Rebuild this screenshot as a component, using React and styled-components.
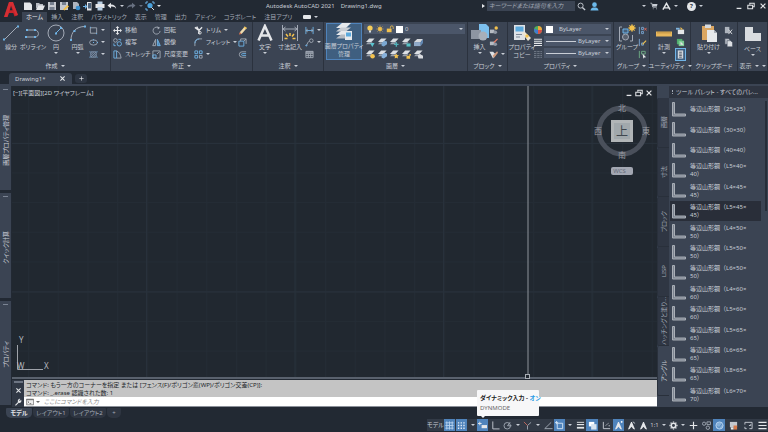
import React, { useState } from 'react';
import styled, { createGlobalStyle } from 'styled-components';

const C = {
  dark: '#222933',
  panel: '#3b4453',
  field: '#4b5669',
  line: '#2b323e',
  cell: '#323a46',
  text: '#c9ced6',
  dim: '#a3aab6',
  blue: '#6fb3e6',
  active: '#4f83bb',
  white: '#e4e6e9',
  yellow: '#f2c14e',
};

const GlobalStyle = createGlobalStyle`
  * { box-sizing: border-box; }
  body {
    margin: 0;
    background: ${C.dark};
    color: ${C.text};
    font-family: "Noto Sans", "Noto Sans CJK JP", sans-serif;
    font-size: 6px;
    line-height: 8px;
    font-feature-settings: "palt";
  }
  button, input, select {
    margin: 0;
    padding: 0;
    border: 0;
    background: none;
    color: inherit;
    font: inherit;
    font-feature-settings: inherit;
    border-radius: 0;
    outline: none;
  }
`;

/* ---------- icons ---------- */

const Svg = styled.svg`
  display: block;
  flex: none;
  width: ${props => props.$size}px;
  height: ${props => props.$size}px;
  fill: none;
  stroke: ${C.dim};
  stroke-width: 1;
`;

const sheets = (accent) => (
  <g stroke="none">
    <path d="M0 4.5 3.500 .5h6L6 4.5z" fill="#dcdfe3" />
    <path d="M0 7 2 4.800h5.500L5 7z" fill="#9aa1ac" />
    {accent}
  </g>
);

const annotation = (extra) => (
  <g>
    <path d="M1 9.5 4.500 1h1L9 9.500 7 9 5 6.500 3 9z" fill={C.white} stroke="none" />
    {extra}
  </g>
);

const SMALL = {
  newFile: <path d="M1 1.5h6l2 2V9H1z" fill={C.white} stroke="none" />,
  open: <g stroke="none"><path d="M1 2h3l1 1h3v2H3L1 8z" fill="#b8bcc3" /><path d="M3 4.5h7L8 9H1z" fill={C.white} /></g>,
  save: <g stroke="none"><path d="M1 1h8v8H1z" fill="#c5c9cf" /><path d="M3 1h4v3H3zM2.5 6h5v3h-5z" fill="#76808f" /></g>,
  saveAs: <g stroke="none"><path d="M1 1h8v8H1z" fill="#c5c9cf" /><path d="M3 1h4v3H3z" fill="#76808f" /><path d="M4 8.5 8.5 4 10 5.5 5.5 9.5z" fill={C.yellow} /></g>,
  web: <g stroke="none"><path d="M2 1h4l2 2v5H2z" fill="#aeb4be" /><circle cx="7" cy="7" r="2.3" fill="#3b8fce" /></g>,
  mobile: <g stroke="none"><path d="M4 1h4.500v8.500H4z" fill={C.white} /><path d="M5 2h3v5.500H5z" fill="#4d6178" /><path d="M0 5h2V3l2.5 2.5L2 8V6H0z" fill={C.blue} /></g>,
  print: <g stroke="none"><path d="M2.5.5h5V3h-5z" fill="#b8cfe4" /><path d="M.5 3h9v4h-9z" fill={C.white} /><path d="M2.5 6h5v3.5h-5z" fill="#b8cfe4" /></g>,
  undo: <path d="M4 1.8.5 4.6 4 7.4V5.6c2.5-.2 4 .4 5.200 2.400C9 5.2 7 3.6 4 3.6z" fill={C.white} stroke="none" />,
  redo: <path d="M6 1.8 9.5 4.6 6 7.4V5.600C3.500 5.4 2 6 .8 8 1 5.2 3 3.6 6 3.6z" fill="#687181" stroke="none" />,
  share: <g><path d="M1 1h2M1 1v2M9 1v2M9 1H7M1 9V7M1 9h2" stroke={C.blue} /><circle cx="5" cy="4.5" r="2.6" fill="#4ba3de" stroke="none" /><path d="M6.5 6.5 9 9" stroke={C.white} /></g>,
  search: <g stroke={C.text}><circle cx="4" cy="4" r="2.8" /><path d="M6 6l3 3" strokeWidth="1.5" /></g>,
  user: <g fill="#6bb8ea" stroke="none"><circle cx="5" cy="3" r="2.6" /><path d="M.5 9.5C.8 6.500 3 6 5 6s4.200.5 4.500 3.500z" /></g>,
  cart: <g><path d="M.5 1.5h1.700l1.300 5h5" stroke={C.text} /><path d="M2.600 2.500h6.800l-.9 3H3.300z" fill={C.text} stroke="none" /><path d="M3.500 8.500h1M7.500 8.500h1" stroke={C.text} /></g>,
  autodesk: <path d="M1 8.5 5 1.5l4 7M2.800 6.500h4.400" stroke={C.white} strokeWidth="1.6" />,
  minimize: <path d="M2 8h6" stroke={C.white} strokeWidth="1.6" />,
  restore: <g stroke={C.white} strokeWidth="1.3"><path d="M3.5 3.5V1.500h5.500v4.500H7" /><path d="M1 4h6v4.500H1z" /></g>,
  close: <path d="m2 2 6 6m0-6L2 8" stroke={C.white} strokeWidth="1.5" />,
  rect: <g><path d="M1.5 2h7v6h-7z" /><path d="M1 1.5h1M8 8.5h1" stroke={C.blue} strokeWidth="1.6" /></g>,
  ellipse: <g><ellipse cx="5" cy="5" rx="4.3" ry="2.9" /><path d="M4.400 5h1.200M4.400 2h1.200M8.800 5H10" stroke={C.blue} strokeWidth="1.3" /></g>,
  hatch: <g stroke="#7f93ab"><path d="M2 2h6v6H2zM2 4l2-2M2 6l4-4M2 8l6-6M4 8l4-4M6 8l2-2" /><path d="M.5 2h1M8.5 2h1M.5 8h1M8.5 8h1" stroke={C.blue} /></g>,
  move: <g><path d="M5 1v8M1 5h8" stroke={C.white} strokeWidth="1.3" /><path d="M5 0 3 2.200h4zM5 10 3 7.800h4zM0 5l2.200-2v4zM10 5 7.800 3v4z" fill={C.white} stroke="none" /></g>,
  copy: <g><circle cx="2.700" cy="2.700" r="2" /><circle cx="7" cy="6.500" r="2.400" stroke={C.blue} /><path d="M1 6v2.500h2M6 1.500h2.500V3" stroke={C.blue} /></g>,
  stretch: <g><path d="M1 1h3v8H1z" stroke={C.blue} /><path d="M4 1c3 1 4.500 4 5 8H4" /></g>,
  rotate: <g><path d="M7.800 2.300A3.900 3.900 0 1 0 9 5.500" /><path d="M6 .5 9 2 6.500 4z" fill={C.dim} stroke="none" /></g>,
  mirror: <g><path d="M4 1.500v7H.8z" /><path d="M6 1.500v7h3.200z" stroke={C.blue} fill="#4d86b5" /></g>,
  scale: <g><path d="M1 1h8v8H1z" /><path d="M1 5.500h3.500V9H1z" stroke={C.blue} /><path d="M5.500 4.500 8 2.200" /></g>,
  trim: <g stroke={C.white}><path d="M1 1.500 5.500 5M3 .8 5.500 5 9 1.500M5.500 5v4" strokeWidth="1.500" /><circle cx="6.500" cy="7.500" r="1.500" /></g>,
  fillet: <g><path d="M1 9V6c0-3 2-5 5-5h3" /><path d="M1 6c0-3 2-5 5-5" stroke={C.blue} /></g>,
  array: <g stroke={C.blue}><path d="M1 1h3v3H1zM6 1h3v3H6zM1 6h3v3H1z" /><path d="M6 6h3v3H6z" stroke={C.dim} /></g>,
  erase: <g stroke="none"><path d="M2 7 7.500.5l2.300 1.700L4 8.800z" fill="#f0dcae" /><path d="m7.500.5 2.300 1.700-1.100 1.300-2.200-1.800z" fill={C.yellow} /><path d="M1 9.500 2 7l2 1.800z" fill="#e0724e" /></g>,
  explode: <g><path d="M1 3.500h5.500V9H1z" stroke={C.blue} /><path d="M3 1h6v5.500M3 1v2.500M6.500 3.500 9 1" /></g>,
  offset: <g><path d="M9 2H4.500a3 3 0 0 0 0 6H9" /><path d="M9 4H5a1 1 0 0 0 0 2h4" stroke={C.blue} /></g>,
  dim: <g><path d="M1 1v8M9 1v8" stroke={C.blue} /><path d="M1 5h8" stroke={C.blue} /><path d="M3 3.500 1 5l2 1.500M7 3.500 9 5 7 6.500" /></g>,
  leader: <g><circle cx="7" cy="3" r="2" /><path d="M5 3.500C3 4 3 6 1.500 8.500" /><circle cx="1.500" cy="8.300" r=".7" stroke={C.blue} /></g>,
  table: <g><path d="M1 1.500h8v7H1zM1 4h8M1 6.200h8M3.700 4v4.500M6.300 4v4.500" /><path d="M1 2.300h8" strokeWidth="1.500" /></g>,
  bulb: <g stroke="none"><circle cx="5" cy="3.800" r="3.300" fill="#f5cd5b" /><path d="M3.800 7h2.400v2.300H3.800z" fill="#dfe2e5" /></g>,
  sun: <g><circle cx="5" cy="5" r="2.500" fill={C.yellow} stroke="none" /><path d="M5 .5v9M.5 5h9M1.800 1.800l6.400 6.400M8.200 1.800 1.800 8.200" stroke={C.yellow} strokeWidth=".7" /></g>,
  unlock: <g><path d="M1 4.500h6V9H1z" fill={C.yellow} stroke="none" /><path d="M5.500 4.500V2.800a1.700 1.700 0 0 1 3.500 0V5" stroke={C.yellow} /></g>,
  swatch: <path d="M0 0h10v10H0z" fill="#fff" stroke="none" />,
  lay1: sheets(<path d="M4.500 5.500h5L7 10z" fill="#5bc4cf" />),
  lay2: sheets(<path d="M4 5.500 7 3l3 1v3L6.500 9.500 4 8.500z" fill="#7ba7d0" />),
  lay3: sheets(<path d="M4.500 6.300h5v1.500h-5zM6.300 4.700h1.500v5H6.300z" fill="#4fb1b8" />),
  lay4: sheets(<path d="M5 6h4.500v3.500H5z" fill="#55c0c4" />),
  lay5: <g stroke="none"><path d="M0 4.500 3.500 1H10L7.500 4.500z" fill="#d4d7dc" /><path d="M0 4.500h7.500V9H0z" fill="#8fa9c8" /><path d="M7.500 4.500 10 1v4.500L7.500 9z" fill="#5f86b3" /></g>,
  lay6: sheets(<circle cx="7.300" cy="7" r="2.500" fill={C.yellow} />),
  lay7: sheets(<path d="M4 5.500 7 3l3 1v3L6.500 9.500 4 8.500z" fill="#88b2dc" />),
  lay8: sheets(<path d="m7 4 .8 1.600 2.200.2-1.500 1.500.3 2.200L7 8.500l-1.800 1 .3-2.200L4 5.800l2.200-.2z" fill={C.yellow} />),
  lay9: sheets(<path d="M5 6.500h4v3.300H5zM8.200 4.500h1.600v2H8.200z" fill={C.yellow} />),
  lay10: sheets(<path d="m4 6 2.500-1.500L10 6.500v3H5z" fill="#d9dbdf" />),
  create: <g stroke="none"><path d="M1 4h5v4H1z" fill="#b7bcc4" /><circle cx="7" cy="7" r="2" fill="#8f97a4" /><circle cx="8" cy="2.200" r="1.900" fill={C.yellow} /></g>,
  editBlock: <g stroke="none"><path d="M1 4h5v4H1z" fill="#b7bcc4" /><circle cx="7" cy="7" r="2" fill="#8f97a4" /><path d="m5 4.500 4-4 1 1-4 4z" fill="#e8806a" /></g>,
  attr: <g stroke="none"><path d="M.5 2h4l3 3-3 4.500z" fill="#dfe2e6" /><path d="m4 6.500 5-5L10 3 5.500 9z" fill="#cf9a7d" /></g>,
  wheel: <g stroke="none"><circle cx="5" cy="5" r="5" fill="#4fae5c" /><path d="M5 5V0a5 5 0 0 1 5 5z" fill="#f0a63b" /><path d="M5 5h5a5 5 0 0 1-5 5z" fill="#db5148" /><path d="M5 5v5A5 5 0 0 1 .3 3.500z" fill="#4279cf" /></g>,
  weights: <path d="M0 1.500h10M0 4h10M0 6.700h10M0 9.300h10" stroke={C.white} strokeWidth="1.300" />,
  types: <path d="M0 2h10M0 4.500h10M0 7h10M0 9.200h10" stroke="#7d8694" strokeDasharray="3 1" />,
  ungroup: <g><path d="M1.500 1v8M4 1.500h2V4H4zM4 6h2v2.500H4z" stroke="#7aa7d2" /><path d="m7 2 2.500 3m0-3L7 5" stroke="#e0695a" /></g>,
  groupEdit: <g><path d="M1.500 1v8M4 5.500h2V8H4z" stroke="#7aa7d2" /><path d="m5 7 4-4" stroke={C.yellow} strokeWidth="1.300" /></g>,
  groupSel: <g><path d="M1.500 1v8M4 1.500h4v3H4z" stroke="#6fae86" /><path d="m5 4 4 4-2 .3-1 1.500z" fill={C.white} stroke="none" /></g>,
  point: <g stroke="none"><path d="M2 4h7v5H2z" fill={C.white} /><path d="M0 2h4v2H0z" fill="#7fb5df" /><path d="m5 1 3 3H5z" fill={C.yellow} /></g>,
  select: <g stroke="none"><path d="M1 1h6v6H1z" fill="#4fae6d" /><path d="M3 3h6v6H3z" fill="#7ccb93" /><path d="m5 4 3.500 3.500H5z" fill={C.white} /></g>,
  calc: <g><path d="M2 .5h6v9H2z" fill="#d3d6db" stroke="none" /><path d="M3.500 2.500h3M3.500 4.500h3M3.500 6.200h3M3.500 8h3" stroke="#4f5967" /></g>,
  cut: <g><path d="M1 1h5v7H1z" fill="#aeb4bd" stroke="none" /><path d="m5 4 4 5m0-5L5 9" stroke={C.white} /></g>,
  copyClip: <g stroke="#3b4453" strokeWidth=".6"><path d="M1 .5h4l2 2V7H1z" fill="#b9bec6" /><path d="M3.500 3h4l2 2v4.800h-6z" fill="#dcdfe3" /></g>,
  wrench: <path d="M1.300 8.700 5 5a2.600 2.600 0 0 1 3-3.800L6.500 2.800l.8.800 1.600-1.500A2.600 2.600 0 0 1 6 6L2.300 9.700z" fill={C.white} stroke="none" />,
  prompt: <g><path d="M.5 1.500h9v7h-9z" fill="#eee" stroke="#777" /><path d="M.5 2h9" stroke="#777" strokeWidth="1.500" /><path d="m2 4 1.500 1.200L2 6.500M4.500 7h2" stroke="#555" /></g>,
  grid: <path d="M2 .5v9M5 .5v9M8 .5v9M.5 2h9M.5 5h9M.5 8h9" stroke="#b8d3ee" />,
  snap: <path d="M1 2h9M1 5h9M1 8h9" stroke="#e5eef8" strokeWidth="1.500" strokeDasharray="1.500 1.500" />,
  dyn: <g stroke="none" fill={C.white}><path d="M4 4.500h6V8H4z" /><path d="M0 2.300h4v1H0zM1.500.8h1v4h-1z" /></g>,
  ortho: <path d="M2 .5v8.300h7.500" stroke={C.text} />,
  polar: <g><circle cx="4.700" cy="5.300" r="3.600" /><path d="M9.500 5.300H5l3-4" /></g>,
  iso: <g><path d="M5 5v4.500M5 5l4-3.500" /><path d="m1 1 4 4" stroke="#c96a5e" /></g>,
  track: <path d="M9.500 8.500H.8l7.200-7" />,
  osnap: <g stroke="#d6e5f4"><path d="M2.500 2.500h6v6h-6z" /><path d="M0 1.800h3.500M1.800 0v3.500" /></g>,
  lweight: <g stroke={C.white}><path d="M1 1.500h8" /><path d="M1 4h8" strokeWidth="1.300" /><path d="M1 7.500h8" strokeWidth="2" /></g>,
  transp: <g stroke="none"><path d="M1 1h6v5H1z" fill="#fff" /><path d="M3.500 3.500h6v6h-6z" fill="#d7e3ef" /></g>,
  ucs: <g stroke={C.text}><path d="M1.500 1v7.500H9" /><path d="m4 5 4-3M8 4.500v2" strokeDasharray="1.500 1" /></g>,
  ann1: annotation(<path d="M7.500 1h2M8.500 0v2" stroke="#fff" />),
  ann2: annotation(<path d="m6.500.8 2.500 2" stroke={C.text} />),
  ann3: annotation(null),
  gear: <g stroke={C.white}><circle cx="5" cy="5" r="2.500" strokeWidth="1.700" /><path d="M5 .5v1.300M5 8.200v1.300M.5 5h1.300M8.200 5h1.300M1.800 1.800l1 1M7.200 7.200l1 1M8.200 1.800l-1 1M2.800 7.200l-1 1" strokeWidth="1.500" /></g>,
  plus: <path d="M5 .8v8.400M.8 5h8.400" stroke={C.white} strokeWidth="1.300" />,
  isolate: <g><circle cx="2.300" cy="3" r="1.800" /><path d="M5.500 1h4v3h-4z" /><circle cx="6.500" cy="7.500" r="1.900" /></g>,
  perf: <g stroke="#b8d3ee"><circle cx="5" cy="5" r="4" fill="#86b0da" /><path d="m2.500 5.500 2 2L8 3" stroke="#4f83bb" /></g>,
  clean: <g stroke="none"><path d="M1 1h8v6H1z" fill="#c5c9cf" /><path d="M5 5h4v4.500H5z" fill="#d77a4b" /><path d="M2 7h3v2.500H2z" fill="#eee" /></g>,
  full: <g stroke={C.text}><path d="M1 4V1.500h8v7H6" /><path d="M1 6.500v2h2M5.500 5h2V3.500" /></g>,
  menu: <path d="M.5 1.500h9M.5 5h9M.5 8.500h9" stroke={C.white} strokeWidth="1.200" />,
};

const LARGE = {
  line: <g><path d="M2 16 16 2" /><path d="M1 15.500h2M15 2.500h2" stroke={C.blue} strokeWidth="2" /></g>,
  polyline: <g><path d="M3 6h8c4 0 5 7 0 7H1" /><path d="M2 6h2M10 6h2M1 13h2M10 13h2" stroke={C.blue} strokeWidth="2" /></g>,
  circle: <g><circle cx="9" cy="9" r="8" /><path d="m9 9 5-5" stroke={C.blue} /><path d="M8 9.500h2M13 4h2" stroke={C.blue} strokeWidth="2" /></g>,
  arc: <g><path d="M2 16C2 8 7 2.500 16 2.500" /><path d="M1 16h2M4.500 7h2M15 2.500h2" stroke={C.blue} strokeWidth="2" /></g>,
  text: <path d="M2.500 16.500 8.900 2l6.600 14.500M5 11.500h8" stroke={C.white} strokeWidth="2.500" />,
  dimension: <g><path d="M1.500 1v16M16.500 1v16M2 5h14M4.500 3 2 5l2.500 2M13.500 3 16 5l-2.500 2" /><path d="M9 9v3M5 10l2 2.500M13 10l-2 2.500M3.500 14.500h3M11.500 14.500h3" stroke={C.yellow} strokeWidth="1.500" /></g>,
  layers: <g stroke="none"><path d="m1 5 6-5h9l-5 5z" fill="#e7e9ec" /><path d="m1 8.500 5-4h10l-5 4z" fill="#c9cdd3" /><path d="m1 12 5-4h10l-5 4z" fill="#e7e9ec" /><path d="m1 15.500 5-4h10l-5 4z" fill="#b4bac2" /><path d="M10 8h7v9h-7z" fill="#e7e9ec" /><path d="M11 9.500h5v4h-5z" fill="#5ba9dd" /></g>,
  insert: <g stroke="none"><path d="M8 0h7l3 3v11H8z" fill="#7cc0ee" /><path d="M0 6h10v9H0z" fill="#8d95a2" /><circle cx="12" cy="12" r="4.500" fill="#a8afb9" /></g>,
  match: <g stroke="none"><path d="M1 1h11v15H1z" fill="#dfe2e6" /><path d="M2.500 2.500h8v5h-8z" fill="#5ba9dd" /><path d="M3 10h6v1H3zM3 12.500h4v1H3z" fill="#7d8694" /><path d="m9 9 3-1 6 6-3 3z" fill="#efe5d0" /><path d="m12 12 2-2 2 2-2 2z" fill={C.yellow} /></g>,
  group: <g><path d="M4 3H1.500v14H4M12 17h2.500v-6" /><circle cx="7.500" cy="13" r="3" fill="#59616e" /><path d="M5 5h5v4H5z" stroke={C.blue} fill="#46617d" /><circle cx="14" cy="4" r="2.700" fill={C.yellow} stroke="none" /><path d="M14 0v8M10 4h8M11.200 1.200l5.600 5.600M16.800 1.200l-5.600 5.600" stroke={C.yellow} strokeWidth=".8" /></g>,
  measure: <g><path d="M1 7.500h16v5H1z" fill="#e8b75b" stroke="none" /><path d="M3 7.500v2M5 7.500v2M7 7.500v2M9 7.500v2M11 7.500v2M13 7.500v2M15 7.500v2" stroke="#8d6a2c" strokeWidth=".6" /></g>,
  paste: <g stroke="none"><path d="M2 2h12v14H2z" fill="#dba662" /><path d="M5 .5h6V4H5z" fill="#d7dadf" /><path d="M7 6h7l3 3v9H7z" fill="#e7e9ec" /><path d="M14 6v3h3z" fill="#aab0b9" /></g>,
  base: <path d="M1 3h8v6h8v8H1z" fill="#d9dce0" stroke="none" />,
};

const Icon = ({ name, size = 9 }) => (
  <Svg $size={size} viewBox="0 0 10 10" aria-hidden="true">{SMALL[name]}</Svg>
);

const BigIcon = ({ name }) => (
  <Svg $size={18} viewBox="0 0 18 18" aria-hidden="true">{LARGE[name]}</Svg>
);

const Caret = styled.i`
  flex: none;
  width: 0;
  height: 0;
  border: 2px solid transparent;
  border-top-color: ${props => props.$color || C.text};
  border-bottom: 0;
`;

const RightCaret = styled.i`
  width: 0;
  height: 0;
  border: 2px solid transparent;
  border-left: 3px solid ${C.white};
  border-right: 0;
`;

/* ---------- header ---------- */

const Page = styled.div`
  display: flex;
  flex-direction: column;
  min-height: 100vh;
`;

const Header = styled.header`
  display: grid;
  grid-template-columns: 22px minmax(0, 1fr);
  grid-template-rows: 12px 10px;
`;

const LogoButton = styled.button`
  grid-row: 1 / 3;
  display: flex;
  align-items: center;
  justify-content: center;
  padding-bottom: 4px;

  svg { width: 14px; height: 15px; }
`;

const TitleBar = styled.div`
  display: grid;
  grid-template-columns: 244fr 216fr 286fr;
  align-items: center;
`;

const IconRow = styled.div`
  display: flex;
  align-items: center;
  gap: 2px;
  padding-left: 1px;
`;

const IconButton = styled.button`
  display: flex;
  align-items: center;
  justify-content: center;
  gap: 3px;
  flex: none;
`;

const Title = styled.div`
  display: flex;
  gap: 6px;
  white-space: nowrap;
`;

const TitleTools = styled.div`
  display: flex;
  align-items: center;
  gap: 4px;
  padding-right: 1px;
`;

const SearchInput = styled.input`
  width: 88px;
  height: 10px;
  padding: 0 2px;
  background: ${C.panel};
  font-style: italic;

  &::placeholder { color: ${C.dim}; opacity: 1; }
`;

const SearchGroup = styled.div`
  display: flex;
  align-items: center;
  gap: 2px;
`;

const Push = styled.span`
  flex: ${props => props.$grow} 0 0;
`;

const Help = styled.span`
  display: flex;
  align-items: center;
  justify-content: center;
  width: 9px;
  height: 9px;
  border-radius: 50%;
  background: ${C.white};
  color: ${C.dark};
  font-weight: 700;
`;

const RibbonTabs = styled.nav`
  display: flex;
`;

const RibbonTab = styled.button`
  padding: 0 4px;
  background: ${props => props.$active ? C.panel : 'none'};
  color: ${props => props.$active ? C.white : C.dim};
  white-space: nowrap;
`;

const RibbonToggle = styled.button`
  display: flex;
  align-items: center;
  gap: 3px;
  padding-left: 7px;

  span {
    width: 8px;
    height: 4px;
    background: ${C.white};
    border-radius: 1px;
  }
`;

/* ---------- ribbon ---------- */

const Ribbon = styled.div`
  display: grid;
  grid-template-columns:
    minmax(0, 111fr) minmax(0, 142fr) minmax(0, 71fr) minmax(0, 144fr) minmax(0, 40fr)
    minmax(0, 106fr) minmax(0, 36fr) minmax(0, 41fr) minmax(0, 47fr) minmax(0, 30fr);
  background: ${C.panel};
`;

const Panel = styled.section`
  display: flex;
  flex-direction: column;
  border-right: 1px solid ${C.line};
`;

const PanelBody = styled.div`
  display: flex;
  flex: 1;
  min-height: 39px;
  gap: ${props => props.$gap || 0}px;
  padding: 1px 2px 0;
  justify-content: ${props => props.$justify || 'flex-start'};
`;

const PanelTitle = styled.button`
  display: flex;
  align-items: center;
  justify-content: center;
  gap: 3px;
  height: 10px;
  padding-bottom: 1px;
  white-space: nowrap;
`;

const BigButton = styled.button`
  display: flex;
  flex-direction: column;
  align-items: center;
  flex: none;
  width: ${props => props.$w}px;
  align-self: flex-start;
  padding: ${props => props.$active ? '0 0 1px' : '1px 0 0'};
  white-space: nowrap;
  line-height: 8px;
  background: ${props => props.$active ? '#3f5f80' : 'none'};
  box-shadow: ${props => props.$active ? `inset 0 0 0 1px ${C.active}` : 'none'};

  span { margin: ${props => props.$low ? '3px 0 1px' : '1px 0'}; }
`;

const SmallGrid = styled.div`
  display: grid;
  grid-template-columns: ${props => props.$cols || 'auto'};
  grid-template-rows: repeat(3, 12px);
  align-content: start;
  align-items: center;
  padding-top: 1px;
`;

const Tool = styled.button`
  display: flex;
  align-items: center;
  gap: 3px;
  height: 11px;
  white-space: nowrap;
  justify-self: start;
  background: ${props => props.$active ? '#3f5f80' : 'none'};
  box-shadow: ${props => props.$active ? `0 0 0 1px ${C.blue}` : 'none'};
`;

const Layers = styled.div`
  flex: 1;
  min-width: 0;
  padding-top: 1px;
`;

const LayerTools = styled.div`
  display: grid;
  grid-template-columns: repeat(5, 12px);
  grid-auto-rows: 12px;
  align-items: center;
`;

const Field = styled.label`
  display: flex;
  align-items: center;
  gap: 2px;
  height: 10px;
  padding: 0 2px;
  margin: 0 0 2px;
  background: ${C.field};

  hr {
    flex: none;
    width: 30px;
    margin: 0;
    border: 0;
    border-top: 1px solid ${C.text};
  }
`;

const Select = styled.select`
  appearance: none;
  flex: 1;
  min-width: 0;
  height: 10px;
  padding-left: ${props => props.$indent ? 4 : 0}px;
`;

const Properties = styled.div`
  display: grid;
  grid-template-columns: 10px minmax(0, 1fr);
  grid-auto-rows: 12px;
  flex: 1;
  min-width: 0;
  align-items: center;
  padding-top: 1px;
`;

/* ---------- file tabs ---------- */

const FileTabs = styled.div`
  display: flex;
  align-items: flex-end;
  height: 15px;
  padding-left: 9px;
  border-bottom: 2px solid ${C.panel};
`;

const FileTab = styled.div`
  display: flex;
  align-items: center;
  justify-content: space-between;
  width: 63px;
  height: 11px;
  padding: 0 6px;
  background: ${C.panel};
  border-radius: 3px 3px 0 0;
`;

const NewTab = styled.button`
  width: 12px;
  height: 9px;
  margin: 0 3px 1px;
  background: #2e3643;
  border-radius: 3px;
  display: flex;
  align-items: center;
  justify-content: center;
`;

/* ---------- workspace ---------- */

const Workspace = styled.main`
  display: grid;
  grid-template-columns: 12px minmax(0, 1fr) 111px;
  flex: 1;
`;

const Rail = styled.aside`
  display: grid;
  grid-template-rows: repeat(3, 1fr);
  gap: 3px;
  padding: 0 1px 2px 0;
`;

const RailPanel = styled.button`
  display: flex;
  flex-direction: column;
  align-items: center;
  background: ${C.panel};
  padding-top: 3px;

  &::before {
    content: "";
    width: 5px;
    height: 1px;
    background: #7b8493;
  }
`;

const Vertical = styled.span`
  margin: auto 0;
  writing-mode: vertical-rl;
  text-orientation: sideways;
  transform: rotate(180deg);
  white-space: nowrap;
`;

const Center = styled.div`
  display: flex;
  flex-direction: column;
`;

const Viewport = styled.div`
  position: relative;
  flex: 1;
  background: #212830;
  border-bottom: 2px solid #59616d;
`;

const Canvas = styled.svg`
  position: absolute;
  inset: 0;
  width: 100%;
  height: 100%;
`;

const PickBox = styled.span`
  position: absolute;
  left: 80%;
  bottom: -2px;
  width: 5px;
  height: 5px;
  margin-left: -3px;
  border: 1px solid #a9aeb5;
  background: #212830;
`;

const ViewLabel = styled.div`
  position: absolute;
  left: 1px;
  top: 3px;
  white-space: nowrap;
`;

const ViewControls = styled.div`
  position: absolute;
  right: 4px;
  top: 3px;
  display: flex;
  gap: 2px;
`;

const Cube = styled.svg`
  position: absolute;
  right: 4px;
  top: 16px;
  width: 62px;
  height: 62px;
  fill: #9a9da2;
  font-size: 8px;
  text-anchor: middle;
`;

const Wcs = styled.button`
  position: absolute;
  right: 24px;
  top: 81px;
  width: 22px;
  height: 8px;
  padding-right: 5px;
  background: #a3a7b2;
  color: #656b79;
  border-radius: 2px;
`;

const UcsIcon = styled.svg`
  position: absolute;
  left: 4px;
  bottom: 2px;
  width: 38px;
  height: 40px;
  fill: none;
  stroke: #9fa3aa;

  text { fill: #b3b7be; stroke: none; font-size: 8px; }
`;

const CommandBox = styled.div`
  display: grid;
  grid-template-columns: 12px minmax(0, 1fr);
  padding-top: 1px;
`;

const CommandHandle = styled.div`
  grid-row: 1 / 3;
  display: flex;
  flex-direction: column;
  align-items: center;
  justify-content: space-between;
  padding: 1px 0;
  background: #303845;

  &::before {
    content: "";
    width: 9px;
    height: 2px;
    background: #6d7583;
  }
`;

const History = styled.div`
  padding: 1px 2px 0;
  background: #c4c4c4;
  color: #22252a;
  white-space: pre;
  overflow: hidden;
`;

const CommandLine = styled.label`
  display: flex;
  align-items: center;
  gap: 2px;
  height: 10px;
  padding-left: 2px;
  background: #fff;
  border-bottom: 1px solid #8b9099;
`;

const CommandInput = styled.input`
  flex: 1;
  padding-left: 2px;
  color: #22252a;
  font-style: italic;

  &::placeholder { color: #8a8a8a; opacity: 1; }
`;

/* ---------- tool palette ---------- */

const Palette = styled.aside`
  display: grid;
  grid-template-columns: 12px minmax(0, 1fr);
  grid-template-rows: 12px minmax(0, 1fr);
  background: ${C.panel};
`;

const PaletteTitle = styled.div`
  grid-column: 2;
  display: flex;
  align-items: center;
  gap: 3px;
  padding-left: 3px;
  background: #2e3440;
  white-space: nowrap;

  &::before {
    content: "";
    height: 4px;
    border-left: 1px dotted ${C.dim};
  }
`;

const PaletteTabs = styled.div`
  display: flex;
  flex-direction: column;
  padding-bottom: 11px;
`;

const PaletteTab = styled.button`
  display: flex;
  justify-content: center;
  flex: 1;
  min-height: 0;
  overflow: hidden;
  background: ${props => props.$active ? C.panel : '#2f3643'};
  color: ${props => props.$active ? C.text : C.dim};
  border: 1px solid #29303b;
  border-width: 0 0 1px 1px;
  border-radius: 2px 0 0 2px;
`;

const PaletteList = styled.div`
  display: flex;
  flex-direction: column;
  padding: 1px 7px 2px 1px;
  font-feature-settings: normal;
  background: linear-gradient(#272e39, #272e39) right 1px top 3px / 2px 110px no-repeat;
`;

const PaletteItem = styled.button`
  display: flex;
  align-items: center;
  flex: 1;
  gap: 4px;
  padding-left: 2px;
  text-align: left;
  white-space: nowrap;
  background: ${props => props.$active ? '#292e39' : 'none'};

  svg { flex: none; width: 14px; height: 15px; }
`;

/* ---------- bottom ---------- */

const LayoutTabs = styled.nav`
  display: flex;
  align-items: center;
  gap: 1px;
  height: 12px;
  padding-left: 6px;
`;

const LayoutTab = styled.button`
  width: ${props => props.$w}px;
  height: 10px;
  background: ${props => props.$active ? C.panel : '#2e3541'};
  color: ${props => props.$active ? C.white : C.dim};
  font-weight: ${props => props.$active ? 700 : 400};
  border-radius: 1px 1px 5px 5px;
  white-space: nowrap;
`;

const StatusBar = styled.footer`
  display: flex;
  justify-content: flex-end;
  height: 13px;
`;

const StatusCell = styled.div`
  position: relative;
  width: ${props => props.$w}px;
  height: 12px;
  background: ${C.cell};
`;

const StatusButton = styled.button`
  display: flex;
  align-items: center;
  justify-content: center;
  gap: 3px;
  width: 100%;
  height: 12px;
  background: ${props => props.$active ? C.active : 'none'};
  border-right: ${props => props.$active ? `1px solid ${C.cell}` : '0'};
  white-space: nowrap;
`;

const Tooltip = styled.div`
  position: absolute;
  left: 0;
  bottom: 15px;
  width: 62px;
  padding: 3px 3px;
  background: #f7f7f8;
  color: #666;
  border-radius: 1px;
  line-height: 10px;
  white-space: nowrap;
  z-index: 2;

  &::after {
    content: "";
    position: absolute;
    left: 4px;
    top: 100%;
    border: 2px solid transparent;
    border-top-color: #f7f7f8;
    border-bottom: 0;
  }

  strong { color: #222; display: block; }
  em { color: #2a9be6; font-style: normal; }
`;

/* ---------- data ---------- */

const TABS = ['ホーム', '挿入', '注釈', 'パラメトリック', '表示', '管理', '出力', 'アドイン', 'コラボレート', '注目アプリ'];

const MODIFY = [
  ['move', '移動'], ['rotate', '回転'], ['trim', 'トリム', true], ['erase'],
  ['copy', '複写'], ['mirror', '鏡像'], ['fillet', 'フィレット', true], ['explode'],
  ['stretch', 'ストレッチ'], ['scale', '尺度変更'], ['array', '', true], ['offset'],
];

const RAIL = ['画層プロパティ管理', 'クイック計算', 'プロパティ'];
const PALETTE_TABS = ['画層', '寸法', 'ブロック', 'LISP', 'ハッチングと塗り...', 'アングル'];

const SHAPES = [
  ['25×25）'], ['30×30）'], ['40×40）'],
  ['L5×40×', '40）'], ['L4×45×', '45）'], ['L5×45×', '45）'],
  ['L4×50×', '50）'], ['L5×50×', '50）'], ['L6×50×', '50）'],
  ['L4×60×', '60）'], ['L5×60×', '60）'], ['L5×65×', '65）'],
  ['L6×65×', '65）'], ['L8×65×', '65）'], ['L6×70×', '70）'],
];

// icon, width, active
const STATUS = [
  ['grid', 12, true], ['snap', 12, true], ['caret', 9], ['dyn', 12, true], ['ortho', 13],
  ['polar', 11], ['caret', 9], ['iso', 11], ['caret', 9], ['track', 12], ['osnap', 12, true],
  ['caret', 8], ['lweight', 12], ['transp', 13, true], ['ucs', 14], ['ann1', 12, true],
  ['ann2', 12], ['ann3', 12], ['scale', 18], ['gear', 12], ['caret', 8], ['plus', 12],
  ['isolate', 14], ['perf', 13, true], ['clean', 15], ['full', 15], ['menu', 12],
];

/* ---------- components ---------- */

function Big({ icon, label, label2, w, caret, active, low }) {
  return (
    <BigButton $w={w} $active={active} $low={low}>
      <BigIcon name={icon} />
      <span>{label}{label2 ? <br /> : null}{label2}</span>
      {caret ? <Caret /> : null}
    </BigButton>
  );
}

function RibbonPanel({ title, caret = true, launcher, gap, justify, children }) {
  return (
    <Panel>
      <PanelBody $gap={gap} $justify={justify}>{children}</PanelBody>
      <PanelTitle>{title}{caret ? <Caret /> : null}{launcher ? <Caret /> : null}</PanelTitle>
    </Panel>
  );
}

function SmallTools({ items, active }) {
  return (
    <SmallGrid>
      {items.map(([name, caret]) => (
        <Tool key={name} $active={name === active} aria-label={name}>
          <Icon name={name} />
          {caret ? <Caret /> : null}
        </Tool>
      ))}
    </SmallGrid>
  );
}

function TopHeader() {
  return (
    <Header>
      <LogoButton aria-label="menu">
        <svg viewBox="0 0 14 15">
          <path d="M0 15 5 0h4l5 13-3.500 1.500L9.300 11H5l-1.500 4z" fill="#c8242b" />
          <path d="M5.800 8.300 7 4l1.500 4.300z" fill={C.dark} />
          <path d="M5 0h4l5 13-2 .8L7 2.500 3.500 15H0z" fill="#e2373b" opacity=".5" />
        </svg>
      </LogoButton>
      <TitleBar>
        <IconRow>
          {['newFile', 'open', 'save', 'saveAs', 'web', 'mobile', 'print'].map(name => (
            <IconButton key={name} aria-label={name}><Icon name={name} size={10} /></IconButton>
          ))}
          <IconButton aria-label="undo"><Icon name="undo" size={10} /><Caret /></IconButton>
          <IconButton aria-label="redo"><Icon name="redo" size={10} /><Caret $color="#687181" /></IconButton>
          <IconButton aria-label="share"><Icon name="share" size={10} /></IconButton>
          <IconButton aria-label="customize"><Caret $color={C.white} /></IconButton>
        </IconRow>
        <Title><span>Autodesk AutoCAD 2021</span><span>Drawing1.dwg</span></Title>
        <TitleTools>
          <SearchGroup>
            <RightCaret />
            <SearchInput aria-label="検索" placeholder="キーワードまたは語句を入力" />
            <IconButton aria-label="search"><Icon name="search" /></IconButton>
          </SearchGroup>
          <IconButton aria-label="user"><Icon name="user" /></IconButton>
          <Push $grow={36} />
          <Caret />
          <IconButton aria-label="cart"><Icon name="cart" size={8} /></IconButton>
          <IconButton aria-label="autodesk"><Icon name="autodesk" /><Caret /></IconButton>
          <Push $grow={1} />
          <IconButton aria-label="help"><Help>?</Help><Caret /></IconButton>
          <Push $grow={25} />
          <IconButton aria-label="minimize"><Icon name="minimize" size={8} /></IconButton>
          <IconButton aria-label="restore"><Icon name="restore" size={8} /></IconButton>
          <IconButton aria-label="close"><Icon name="close" size={8} /></IconButton>
        </TitleTools>
      </TitleBar>
      <RibbonTabs>
        {TABS.map((tab, i) => <RibbonTab key={tab} $active={i === 0}>{tab}</RibbonTab>)}
        <RibbonToggle aria-label="ribbon"><span /><Caret /></RibbonToggle>
      </RibbonTabs>
    </Header>
  );
}

function MainRibbon() {
  return (
    <Ribbon>
      <RibbonPanel title="作成">
        <Big icon="line" label="線分" w={18} />
        <Big icon="polyline" label="ポリライン" w={26} />
        <Big icon="circle" label="円" w={20} caret />
        <Big icon="arc" label="円弧" w={23} caret />
        <SmallTools items={[['rect', true], ['ellipse', true], ['hatch', true]]} />
      </RibbonPanel>
      <RibbonPanel title="修正">
        <SmallGrid $cols="39px 42px 44px 12px">
          {MODIFY.map(([name, label, caret]) => (
            <Tool key={name} aria-label={name}>
              <Icon name={name} />
              {label}
              {caret ? <Caret /> : null}
            </Tool>
          ))}
        </SmallGrid>
      </RibbonPanel>
      <RibbonPanel title="注釈">
        <Big icon="text" label="文字" w={20} caret />
        <Big icon="dimension" label="寸法記入" w={30} />
        <SmallTools items={[['dim', true], ['leader', true], ['table']]} />
      </RibbonPanel>
      <RibbonPanel title="画層" gap={2}>
        <Big icon="layers" label="画層プロパティ" label2="管理" w={36} active />
        <Layers>
          <Field>
            <Icon name="bulb" size={8} />
            <Icon name="sun" size={8} />
            <Icon name="unlock" size={8} />
            <Icon name="swatch" size={7} />
            <Select aria-label="画層"><option>0</option></Select>
            <Caret />
          </Field>
          <LayerTools>
            {[1, 2, 3, 4, 5, 6, 7, 8, 9, 10].map(n => (
              <IconButton key={n} aria-label={`layer ${n}`}><Icon name={`lay${n}`} /></IconButton>
            ))}
          </LayerTools>
        </Layers>
      </RibbonPanel>
      <RibbonPanel title="ブロック">
        <Big icon="insert" label="挿入" w={19} caret />
        <SmallTools items={[['create'], ['editBlock'], ['attr', true]]} />
      </RibbonPanel>
      <RibbonPanel title="プロパティ">
        <Big icon="match" label="プロパティ" label2="コピー" w={24} />
        <Properties>
          <Icon name="wheel" size={8} />
          <Field><Icon name="swatch" size={7} /><Select $indent aria-label="色"><option>ByLayer</option></Select><Caret /></Field>
          <Icon name="weights" size={8} />
          <Field><hr /><Select aria-label="線の太さ"><option>ByLayer</option></Select><Caret /></Field>
          <Icon name="types" size={8} />
          <Field><hr /><Select aria-label="線種"><option>ByLayer</option></Select><Caret /></Field>
        </Properties>
      </RibbonPanel>
      <RibbonPanel title="グループ">
        <Big icon="group" label="グループ" w={22} />
        <SmallTools items={[['ungroup'], ['groupEdit'], ['groupSel']]} />
      </RibbonPanel>
      <RibbonPanel title="ユーティリティ">
        <Big icon="measure" label="計測" w={24} caret />
        <SmallTools items={[['point'], ['select'], ['calc']]} active="calc" />
      </RibbonPanel>
      <RibbonPanel title="クリップボード" caret={false}>
        <Big icon="paste" label="貼り付け" w={31} caret />
        <SmallTools items={[['cut'], ['copyClip']]} />
      </RibbonPanel>
      <RibbonPanel title="表示" launcher justify="center">
        <Big icon="base" label="ベース" w={26} caret low />
      </RibbonPanel>
    </Ribbon>
  );
}

function DrawingView() {
  return (
    <Viewport>
      <Canvas>
        <defs>
          <pattern id="minor" x="16" y="27" width="29.7" height="29.7" patternUnits="userSpaceOnUse">
            <path d="M0 .5h30M.5 0v30" stroke="#242c35" />
          </pattern>
          <pattern id="major" x="134" y="57" width="148.5" height="148.5" patternUnits="userSpaceOnUse">
            <path d="M0 .5h149M.5 0v149" stroke="#28313b" />
          </pattern>
        </defs>
        <rect width="100%" height="100%" fill="url(#minor)" />
        <rect width="100%" height="100%" fill="url(#major)" />
        <line x1="80%" x2="80%" y1="0" y2="100%" stroke="#8f949b" />
      </Canvas>
      <PickBox />
      <ViewLabel>[−][平面図][2D ワイヤフレーム]</ViewLabel>
      <ViewControls>
        <IconButton aria-label="minimize view"><Icon name="minimize" size={8} /></IconButton>
        <IconButton aria-label="restore view"><Icon name="restore" size={8} /></IconButton>
        <IconButton aria-label="close view"><Icon name="close" size={8} /></IconButton>
      </ViewControls>
      <Cube viewBox="0 0 62 62">
        <circle cx="31" cy="29" r="23" fill="none" stroke="#4a505b" strokeWidth="5" />
        <path d="M20 18h22v22H20z" fill="#b1b5b7" />
        <path d="M23 21h16v16H23z" fill="#a1a8ac" />
        <text x="31" y="34" fontSize="12" fill="#3f474f">上</text>
        <text x="31" y="9">北</text>
        <text x="31" y="56">南</text>
        <text x="7" y="32">西</text>
        <text x="55" y="32">東</text>
      </Cube>
      <Wcs>WCS</Wcs>
      <UcsIcon viewBox="0 0 38 40">
        <path d="M1.500 10v24.500H27" />
        <text x="3" y="8">Y</text>
        <text x="28" y="34">X</text>
        <text x="1" y="34">W</text>
      </UcsIcon>
    </Viewport>
  );
}

function ToolPalette() {
  const [selected, setSelected] = useState(5);
  return (
    <Palette>
      <PaletteTitle>ツール パレット - すべてのパレ...</PaletteTitle>
      <PaletteTabs>
        {PALETTE_TABS.map((tab, i) => (
          <PaletteTab key={tab} $active={i === 5}><Vertical>{tab}</Vertical></PaletteTab>
        ))}
      </PaletteTabs>
      <PaletteList>
        {SHAPES.map(([first, second], i) => (
          <PaletteItem key={first} $active={i === selected} onClick={() => setSelected(i)}>
            <svg viewBox="0 0 14 15">
              <path d="M.5.5h2V12h11v2H.5z" fill="#7c8490" stroke="#a9aeb6" />
            </svg>
            <span>等辺山形鋼（{first}{second ? <br /> : null}{second}</span>
          </PaletteItem>
        ))}
      </PaletteList>
    </Palette>
  );
}

function Status() {
  return (
    <StatusBar>
      <StatusCell $w={17}><StatusButton>モデル</StatusButton></StatusCell>
      {STATUS.map(([name, w, active], i) => (
        <StatusCell key={i} $w={w}>
          <StatusButton $active={active} aria-label={name}>
            {name === 'scale' ? '1:1' : null}
            {name === 'scale' || name === 'caret' ? <Caret /> : <Icon name={name} />}
          </StatusButton>
          {name === 'dyn' ? (
            <Tooltip role="tooltip">
              <strong>ダイナミック入力 - <em>オン</em></strong>
              DYNMODE
            </Tooltip>
          ) : null}
        </StatusCell>
      ))}
    </StatusBar>
  );
}

function App() {
  return (
    <Page>
      <GlobalStyle />
      <TopHeader />
      <MainRibbon />
      <FileTabs>
        <FileTab>
          Drawing1*
          <IconButton aria-label="close tab"><Icon name="close" size={7} /></IconButton>
        </FileTab>
        <NewTab aria-label="new tab"><Icon name="plus" size={5} /></NewTab>
      </FileTabs>
      <Workspace>
        <Rail>
          {RAIL.map(name => <RailPanel key={name}><Vertical>{name}</Vertical></RailPanel>)}
        </Rail>
        <Center>
          <DrawingView />
          <CommandBox>
            <CommandHandle>
              <IconButton aria-label="close command line"><Icon name="close" size={7} /></IconButton>
              <IconButton aria-label="customize command line"><Icon name="wrench" size={8} /></IconButton>
            </CommandHandle>
            <History>
              コマンド: もう一方のコーナーを指定 または [フェンス(F)/ポリゴン窓(WP)/ポリゴン交差(CP)]:
              <br />
              コマンド: _.erase 認識された数: 1
            </History>
            <CommandLine>
              <Icon name="prompt" size={8} />
              <Caret $color="#666" />
              <CommandInput aria-label="コマンド" placeholder="ここにコマンドを入力" />
            </CommandLine>
          </CommandBox>
        </Center>
        <ToolPalette />
      </Workspace>
      <LayoutTabs>
        <LayoutTab $w={26} $active>モデル</LayoutTab>
        <LayoutTab $w={36}>レイアウト1</LayoutTab>
        <LayoutTab $w={36}>レイアウト2</LayoutTab>
        <LayoutTab $w={14}>+</LayoutTab>
      </LayoutTabs>
      <Status />
    </Page>
  );
}

export default App;
